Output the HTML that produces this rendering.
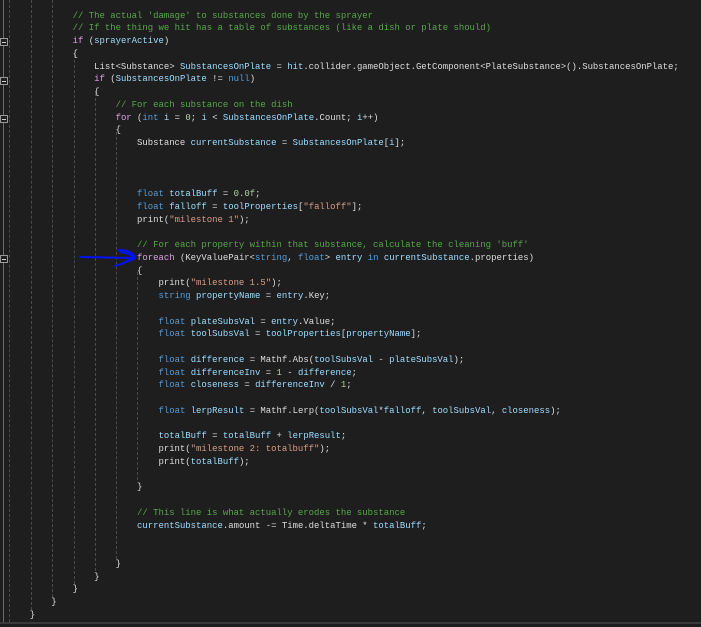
<!DOCTYPE html>
<html><head><style>
body{margin:0;width:701px;height:627px;background:#1e1e1e;overflow:hidden;position:relative}
pre{position:absolute;left:8.3px;top:9.6px;margin:0;font-family:"Liberation Mono",monospace;font-size:8.95px;line-height:12.75px;color:#dcdcdc}
.g{position:absolute;width:0;border-left:1px dashed #4a4a4a}
.k{color:#569cd6}.c{color:#d8a0df}.v{color:#9cdcfe}.s{color:#d69d85}.n{color:#b5cea8}.m{color:#57a64a}.t{color:#dcdcdc}
.box{position:absolute;left:0;width:6px;height:6px;border:1px solid #999;background:#1e1e1e}
.box:after{content:"";position:absolute;left:1px;top:2.5px;width:4px;height:1px;background:#ccc}
</style></head><body>
<div style="position:absolute;left:3px;top:0;height:622px;border-left:1px solid #6a6a6a"></div>
<div style="position:absolute;left:0;top:622px;width:701px;border-top:2px solid #3a3a3a"></div>
<div class="g" style="left:9px;top:0;height:622px"></div>
<div class="g" style="left:31px;top:0;height:610px"></div>
<div class="g" style="left:52px;top:0;height:597px"></div>
<div class="g" style="left:74px;top:55px;height:529px"></div>
<div class="g" style="left:95px;top:93px;height:478px"></div>
<div class="g" style="left:116px;top:132px;height:427px"></div>
<div class="g" style="left:137px;top:272px;height:208px"></div>
<div class="box" style="top:38px"></div>
<div class="box" style="top:77px"></div>
<div class="box" style="top:115px"></div>
<div class="box" style="top:255px"></div>
<pre>            <span class="m">// The actual 'damage' to substances done by the sprayer</span>
            <span class="m">// If the thing we hit has a table of substances (like a dish or plate should)</span>
            <span class="c">if</span> (<span class="v">sprayerActive</span>)
            {
                List&lt;Substance&gt; <span class="v">SubstancesOnPlate</span> = <span class="v">hit</span>.collider.gameObject.GetComponent&lt;PlateSubstance&gt;().SubstancesOnPlate;
                <span class="c">if</span> (<span class="v">SubstancesOnPlate</span> != <span class="k">null</span>)
                {
                    <span class="m">// For each substance on the dish</span>
                    <span class="c">for</span> (<span class="k">int</span> <span class="v">i</span> = <span class="n">0</span>; <span class="v">i</span> &lt; <span class="v">SubstancesOnPlate</span>.Count; <span class="v">i</span>++)
                    {
                        Substance <span class="v">currentSubstance</span> = <span class="v">SubstancesOnPlate</span>[<span class="v">i</span>];



                        <span class="k">float</span> <span class="v">totalBuff</span> = <span class="n">0.0f</span>;
                        <span class="k">float</span> <span class="v">falloff</span> = <span class="v">toolProperties</span>[<span class="s">"falloff"</span>];
                        print(<span class="s">"milestone 1"</span>);

                        <span class="m">// For each property within that substance, calculate the cleaning 'buff'</span>
                        <span class="c">foreach</span> (KeyValuePair&lt;<span class="k">string</span>, <span class="k">float</span>&gt; <span class="v">entry</span> <span class="k">in</span> <span class="v">currentSubstance</span>.properties)
                        {
                            print(<span class="s">"milestone 1.5"</span>);
                            <span class="k">string</span> <span class="v">propertyName</span> = <span class="v">entry</span>.Key;

                            <span class="k">float</span> <span class="v">plateSubsVal</span> = <span class="v">entry</span>.Value;
                            <span class="k">float</span> <span class="v">toolSubsVal</span> = <span class="v">toolProperties</span>[<span class="v">propertyName</span>];

                            <span class="k">float</span> <span class="v">difference</span> = Mathf.Abs(<span class="v">toolSubsVal</span> - <span class="v">plateSubsVal</span>);
                            <span class="k">float</span> <span class="v">differenceInv</span> = <span class="n">1</span> - <span class="v">difference</span>;
                            <span class="k">float</span> <span class="v">closeness</span> = <span class="v">differenceInv</span> / <span class="n">1</span>;

                            <span class="k">float</span> <span class="v">lerpResult</span> = Mathf.Lerp(<span class="v">toolSubsVal</span>*<span class="v">falloff</span>, <span class="v">toolSubsVal</span>, <span class="v">closeness</span>);

                            <span class="v">totalBuff</span> = <span class="v">totalBuff</span> + <span class="v">lerpResult</span>;
                            print(<span class="s">"milestone 2: totalbuff"</span>);
                            print(<span class="v">totalBuff</span>);

                        }

                        <span class="m">// This line is what actually erodes the substance</span>
                        <span class="v">currentSubstance</span>.amount -= Time.deltaTime * <span class="v">totalBuff</span>;


                    }
                }
            }
        }
    }
</pre>
<svg style="position:absolute;left:0;top:0" width="701" height="627">
<path d="M80 257 L133 258 M118 250 Q130 250 134 256 Q128 262 115 266 M120 252 Q132 254 133 258 M122 263 Q132 260 135 258" stroke="#0010ff" stroke-width="2" fill="none" stroke-linecap="round"/>
</svg>
</body></html>
